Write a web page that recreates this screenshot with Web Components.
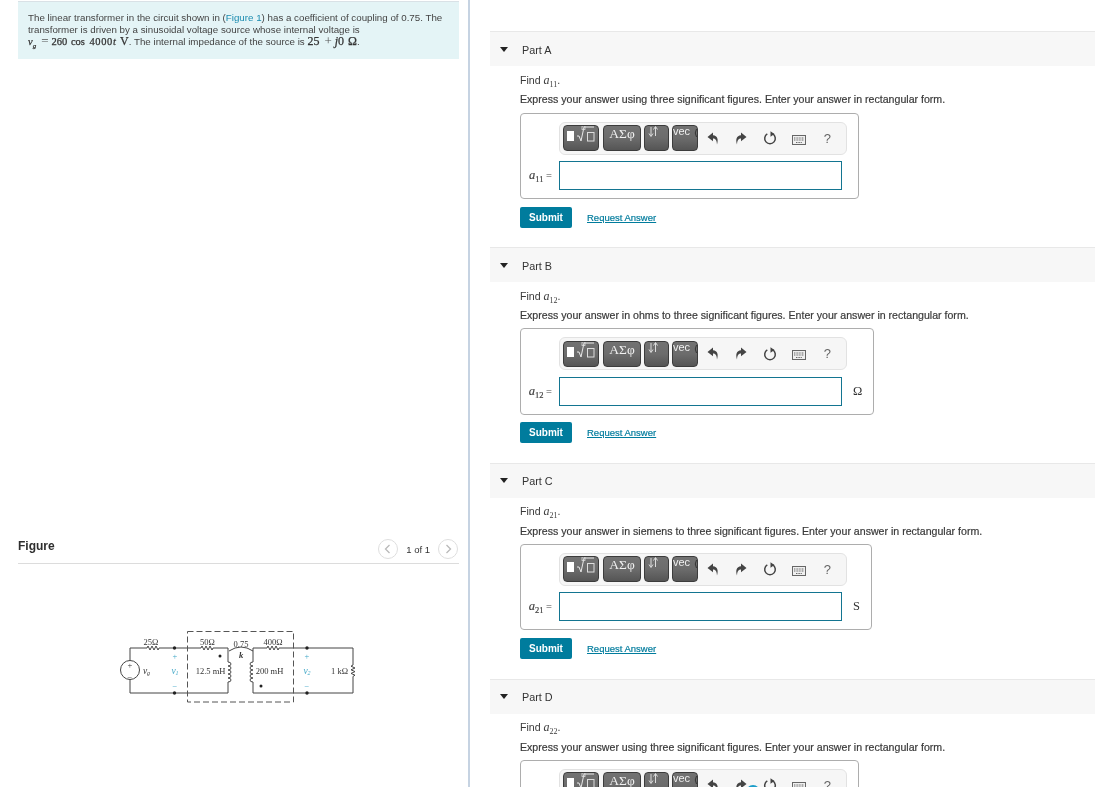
<!DOCTYPE html>
<html>
<head>
<meta charset="utf-8">
<title>Transformer problem</title>
<style>
  html, body { margin: 0; height: 787px; overflow: hidden; background: #fff; }
  body { font-family: "Liberation Sans", Arial, sans-serif; color: #3a3a3a; }
</style>
</head>
<body>
<mp-page>
  <problem-intro slot="left"></problem-intro>
  <figure-panel slot="left"></figure-panel>

  <part-section slot="right" name="Part A" symbol="11" instruction="Express your answer using three significant figures. Enter your answer in rectangular form."></part-section>
  <part-section slot="right" name="Part B" symbol="12" unit="Ω" instruction="Express your answer in ohms to three significant figures. Enter your answer in rectangular form."></part-section>
  <part-section slot="right" name="Part C" symbol="21" unit="S" instruction="Express your answer in siemens to three significant figures. Enter your answer in rectangular form."></part-section>
  <part-section slot="right" name="Part D" symbol="22" instruction="Express your answer using three significant figures. Enter your answer in rectangular form."></part-section>
</mp-page>

<script>
class MpPage extends HTMLElement {
  constructor() {
    super();
    this.attachShadow({ mode: "open" });
    this.shadowRoot.innerHTML = `
      <style>
        :host { display: flex; width: 1095px; height: 787px; overflow: hidden; position: relative; filter: blur(.25px); }
        .left { width: 441px; padding: 1px 9px 0 18px; border-right: 2px solid #c6d3e2; flex: none; }
        .right { flex: 1; padding: 32.45px 0 0 20px; min-width: 0; }
        .spin { position: absolute; left: 746px; top: 785px; width: 14px; height: 14px; box-sizing: border-box; border: 2px solid #1b9dc9; border-radius: 50%; }
      </style>
      <div class="left"><slot name="left"></slot></div>
      <div class="right"><slot name="right"></slot></div>
      <div class="spin"></div>
    `;
  }
}

class ProblemIntro extends HTMLElement {
  constructor() {
    super();
    this.attachShadow({ mode: "open" });
    this.shadowRoot.innerHTML = `
      <style>
        :host { display: block; background: #e4f4f6; border-top: 1px solid #d9e1e6; padding: 10px 10px 0; width: 421px; height: 47px; font-size: 9.75px; line-height: 11.5px; color: #444; white-space: nowrap; }
        a { color: #1c8cb0; text-decoration: none; }
        .m { font-family: "Liberation Serif", serif; font-size: 10.5px; color: #333; -webkit-text-stroke: .25px #333; }
        .l { font-size: 12px; }
        .o { font-size: 13px; -webkit-text-stroke: 0; color: #555; margin: 0 3px; }
        sub { font-size: 7px; line-height: 0; }
      </style>
      The linear transformer in the circuit shown in (<a>Figure 1</a>) has a coefficient of coupling of 0.75. The<br>
      transformer is driven by a sinusoidal voltage source whose internal voltage is<br>
      <span class="m"><i>v<sub>g</sub></i><span class="o" style="margin:0 3px 0 5px">=</span>260 <span style="margin-left:1px">cos</span> <span style="margin-left:2px;letter-spacing:.6px">4000<i>t</i></span> <span class="l" style="margin-left:1px">V</span></span>. The internal impedance of the source is <span class="m l">25<span class="o" style="margin:0 3px 0 5px">+</span><i>j</i>0 <span style="margin-left:1px">Ω</span></span>.
    `;
  }
}

class FigurePanel extends HTMLElement {
  constructor() {
    super();
    this.attachShadow({ mode: "open" });
    this.shadowRoot.innerHTML = `
      <style>
        :host { display: block; margin-top: 480px; }
        .head { display: flex; align-items: flex-start; justify-content: space-between; height: 24px; border-bottom: 1px solid #dcdcdc; }
        h3 { margin: 0; font-size: 12px; line-height: 14px; font-weight: bold; color: #2e2e2e; }
        .pager { display: flex; align-items: center; gap: 8px; font-size: 9.5px; color: #333; margin-right: 1px; }
        .c { width: 20px; height: 20px; border: 1px solid #dedede; border-radius: 50%; box-sizing: border-box; display: block; }
        .cv { margin: 56px 0 0 92px; display: block; }
      </style>
      <div class="head">
        <h3>Figure</h3>
        <div class="pager">
          <svg class="c" viewBox="0 0 18 18"><path d="M10.500 5 6.500 9l4 4" fill="none" stroke="#b9b9b9" stroke-width="1.300"/></svg>
          <span>1 of 1</span>
          <svg class="c" viewBox="0 0 18 18"><path d="M7.500 5l4 4-4 4" fill="none" stroke="#b9b9b9" stroke-width="1.300"/></svg>
        </div>
      </div>
      <circuit-figure class="cv"></circuit-figure>
    `;
  }
}

class CircuitFigure extends HTMLElement {
  constructor() {
    super();
    this.attachShadow({ mode: "open" });
    const zig = (x, y) => `M${x} ${y}l1-2 2 4 2-4 2 4 2-4 2 4 1-2`;
    const vzig = (x, y) => `M${x} ${y}l-2 1.200 4 1.800-4 1.800 4 1.800-4 1.800 4 1.800-2 1.200`;
    const coil = (x, y, d) => {
      let p = `M${x} ${y}`;
      for (let i = 0; i < 5; i++) p += `a3 2 0 0 ${d > 0 ? 1 : 0} 0 4`;
      return p;
    };
    this.shadowRoot.innerHTML = `
      <style>
        :host { display: block; width: 260px; height: 90px; }
        svg { display: block; }
        text { font-family: "Liberation Serif", serif; font-size: 8.5px; fill: #333; text-anchor: middle; }
        .v { font-size: 9.5px; font-style: italic; }
        .w { fill: none; stroke: #444; stroke-width: 1; }
        .blue { fill: #3ea6c6; }
      </style>
      <svg width="260" height="90" viewBox="110 620 260 90">
        <path class="w" d="M130 660.500V648H147M159 648H201M213 648H228V662M228 682V693H130V679.500"/>
        <path class="w" d="${zig(147, 648)}"/>
        <path class="w" d="${zig(201, 648)}"/>
        <path class="w" d="${coil(228, 662, 1)}"/>
        <path class="w" d="M253 662V648H267M279 648H353V665M353 676.400V693H253V682"/>
        <path class="w" d="${zig(267, 648)}"/>
        <path class="w" d="${coil(253, 662, -1)}"/>
        <path class="w" d="${vzig(353, 665)}"/>
        <path class="w" d="M229 651q12-8 24 0"/>
        <rect x="187.500" y="631.500" width="106" height="70.500" fill="none" stroke="#555" stroke-width="1" stroke-dasharray="6 3"/>
        <circle class="w" cx="130" cy="670" r="9.500"/>
        <circle cx="174.500" cy="648" r="1.700" fill="#222"/><circle cx="174.500" cy="693" r="1.700" fill="#222"/>
        <circle cx="307" cy="648" r="1.700" fill="#222"/><circle cx="307" cy="693" r="1.700" fill="#222"/>
        <circle cx="220" cy="656" r="1.500" fill="#222"/><circle cx="261" cy="686" r="1.500" fill="#222"/>
        <text x="151" y="645">25Ω</text>
        <text x="207.500" y="645">50Ω</text>
        <text x="273" y="645">400Ω</text>
        <text x="241" y="647">0.75</text>
        <text x="241" y="658" font-style="italic" font-weight="bold">k</text>
        <text x="130" y="668">+</text>
        <text x="130" y="680">−</text>
        <text x="146.500" y="674" class="v">v<tspan font-size="6" dy="1">g</tspan></text>
        <text x="175" y="659" class="blue">+</text>
        <text x="175" y="674" class="blue v">v<tspan font-size="6" dy="1">1</tspan></text>
        <text x="175" y="689" class="blue">−</text>
        <text x="210.500" y="673.500">12.5 mH</text>
        <text x="269.500" y="673.500">200 mH</text>
        <text x="307" y="659" class="blue">+</text>
        <text x="307" y="674" class="blue v">v<tspan font-size="6" dy="1">2</tspan></text>
        <text x="307" y="689" class="blue">−</text>
        <text x="339.500" y="673.500">1 kΩ</text>
      </svg>
    `;
  }
}

class MathToolbar extends HTMLElement {
  constructor() {
    super();
    this.attachShadow({ mode: "open" });
    this.shadowRoot.innerHTML = `
      <style>
        :host { display: flex; align-items: center; width: 288px; height: 33px; box-sizing: border-box; background: #f6f6f6; border: 1px solid #e2e2e2; border-radius: 6px; padding: 0 0 0 3px; }
        .b { height: 26px; box-sizing: border-box; border: 1px solid #3c3c3c; border-radius: 4px; background: linear-gradient(#727272 0, #6c6c6c 50%, #555 100%); color: #f1f1f1; display: flex; overflow: hidden; }
        .t { font-family: "Liberation Serif", serif; font-size: 13.5px; line-height: 15px; justify-content: center; }
        .v { font-size: 11px; line-height: 10px; justify-content: space-between; }
        svg { display: block; }
        .tools { display: flex; margin-left: 1px; }
        .tools span { width: 28.300px; display: flex; justify-content: center; align-items: center; color: #666; font-size: 13px; }
      </style>
      <div class="b" style="width:36px;margin-right:4px">
        <svg width="34" height="24" viewBox="0 0 34 24"><rect x="3" y="5" width="7" height="10" fill="#fff"/><path d="M13 10h2l2 5 3-14h10" fill="none" stroke="#e8e8e8" stroke-width="1"/><rect x="18" y="0" width="3" height="3.500" fill="none" stroke="#ddd" stroke-width=".8"/><rect x="23.500" y="6.500" width="6.500" height="8.500" fill="none" stroke="#ddd"/></svg>
      </div>
      <div class="b t" style="width:38px;margin-right:3px">ΑΣφ</div>
      <div class="b" style="width:25px;margin-right:3px">
        <svg width="14" height="14" viewBox="0 0 14 14" style="margin-left:1px"><path d="M5 1v9M3 7.500l2 3 2-3M9.500 10V1M7.500 3.500l2-3 2 3" fill="none" stroke="#ddd" stroke-width="1"/></svg>
      </div>
      <div class="b v" style="width:26px"><span>vec</span><svg width="3" height="14" viewBox="0 0 3 14"><path d="M2.500 3Q0 7 2.500 11" fill="none" stroke="#333"/></svg></div>
      <div class="tools">
        <span><svg width="12" height="13" viewBox="0 0 12 13"><path d="M6 .5 .5 5 6 9.300V6.600c2.300 0 3.700 1.300 4 5.900 1.600-4.900.6-8.800-4-9.200z" fill="#444"/></svg></span>
        <span><svg width="12" height="13" viewBox="0 0 12 13"><path d="M6 .5l5.500 4.500L6 9.300V6.600c-2.300 0-3.700 1.300-4 5.900-1.600-4.900-.6-8.800 4-9.200z" fill="#444"/></svg></span>
        <span><svg width="14" height="14" viewBox="0 0 14 14"><path d="M9.700 2.900a5.300 5.300 0 1 1-5.400 0" fill="none" stroke="#444" stroke-width="1.500"/><path d="M7.500.2v5.500l4-2.800z" fill="#444"/></svg></span>
        <span style="padding-left:1px"><svg width="14" height="10" viewBox="0 0 14 10" style="margin-top:3px"><rect x=".5" y=".5" width="13" height="9" fill="#f0f0f0" stroke="#666"/><path d="M2 3h10M2 5h10M4 7.500h6" stroke="#666" stroke-dasharray="1 .6"/></svg></span>
        <span>?</span>
      </div>
    `;
  }
}

class AnswerBox extends HTMLElement {
  constructor() {
    super();
    this.attachShadow({ mode: "open" });
  }
  connectedCallback() {
    const unit = this.getAttribute("unit") || "";
    const symbol = this.getAttribute("symbol") || "";
    this.shadowRoot.innerHTML = `
      <style>
        :host { display: table; box-sizing: border-box; height: 86.500px; border: 1px solid #adadad; border-radius: 4px; padding: 8px 11px 0 38px; }
        .row { display: flex; align-items: center; margin-top: 6.300px; position: relative; }
        label { position: absolute; right: 100%; margin-right: 7px; white-space: nowrap; font-family: "Liberation Serif", serif; font-size: 10.5px; color: #444; }
        label i { font-size: 12.500px; -webkit-text-stroke: .2px #444; }
        sub { font-size: 8.500px; line-height: 0; -webkit-text-stroke: .2px #444; }
        .in { width: 283px; height: 29px; box-sizing: border-box; border: 1px solid #137591; background: #fff; flex: none; }
        .unit { font-family: "Liberation Serif", serif; font-size: 12.500px; color: #333; margin-left: 11px; }
      </style>
      <math-toolbar></math-toolbar>
      <div class="row">
        <label><i>a</i><sub>${symbol}</sub> =</label>
        <div class="in"></div>
        ${unit ? `<span class="unit">${unit}</span>` : ""}
      </div>
    `;
  }
}

class PartSection extends HTMLElement {
  constructor() {
    super();
    this.attachShadow({ mode: "open" });
  }
  connectedCallback() {
    const name = this.getAttribute("name");
    const symbol = this.getAttribute("symbol");
    const unit = this.getAttribute("unit") || "";
    const instruction = this.getAttribute("instruction");
    this.shadowRoot.innerHTML = `
      <style>
        :host { display: block; height: 215.7px; font-size: 10.6px; color: #3a3a3a; }
        .hd { height: 34px; background: #f7f7f7; box-shadow: 0 -1px #e8e8e8; display: flex; align-items: center; font-size: 10.8px; color: #333; }
        .hd b { font-weight: normal; padding-top: 1px; }
        .tri { width: 0; height: 0; border: 4px solid transparent; border-top: 5px solid #222; border-bottom: 0; margin: 0 14px 0 10px; }
        .body { padding: 6.600px 0 0 30px; }
        .find { line-height: 14px; }
        .find i { font-family: "Liberation Serif", serif; font-size: 12px; }
        sub { font-size: 8px; line-height: 0; font-family: "Liberation Serif", serif; }
        .ins { line-height: 14px; margin: 5.450px 0 6.100px; -webkit-text-stroke: .2px #3a3a3a; white-space: nowrap; }
        .act { display: flex; align-items: center; margin-top: 7.500px; }
        .sub { width: 52px; height: 21px; background: #007c9d; color: #fff; font-weight: bold; font-size: 10px; border-radius: 2px; display: flex; align-items: center; justify-content: center; }
        a { margin-left: 15px; color: #007c9d; text-decoration: underline; font-size: 9.500px; -webkit-text-stroke: .2px #007c9d; }
      </style>
      <div class="hd"><span class="tri"></span><b>${name}</b></div>
      <div class="body">
        <div class="find">Find <i>a</i><sub>${symbol}</sub>.</div>
        <div class="ins">${instruction}</div>
        <answer-box symbol="${symbol}" unit="${unit}"></answer-box>
        <div class="act"><div class="sub">Submit</div><a>Request Answer</a></div>
      </div>
    `;
  }
}

customElements.define("mp-page", MpPage);
customElements.define("problem-intro", ProblemIntro);
customElements.define("figure-panel", FigurePanel);
customElements.define("circuit-figure", CircuitFigure);
customElements.define("math-toolbar", MathToolbar);
customElements.define("answer-box", AnswerBox);
customElements.define("part-section", PartSection);
</script>
</body>
</html>
